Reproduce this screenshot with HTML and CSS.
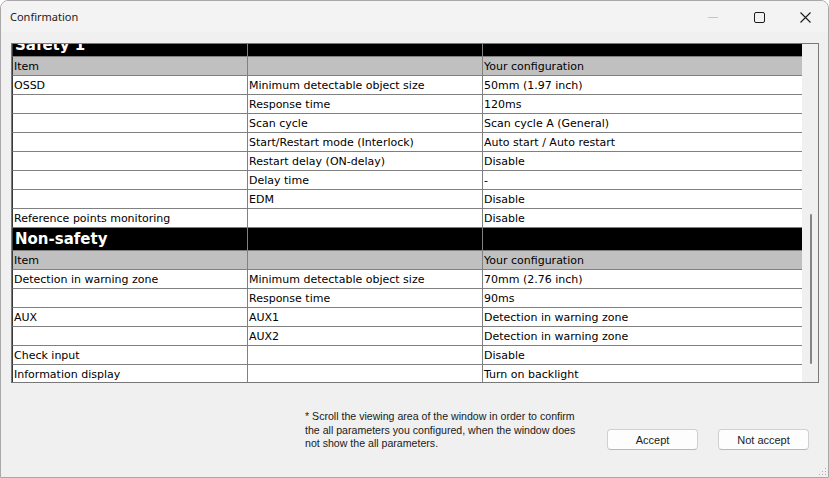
FILE: index.html
```html
<!DOCTYPE html>
<html lang="en">
<head>
<meta charset="utf-8">
<title>Confirmation</title>
<link rel="stylesheet" href="styles.css">
</head>
<body>
<div class="window">
  <div class="titlebar">
    <span class="title">Confirmation</span>
    <div class="controls">
      <span class="ctl ctl-min"><svg width="10" height="10" viewBox="0 0 10 10"><line x1="0" y1="5.5" x2="10" y2="5.5" stroke="#c6c6c6" stroke-width="1"/></svg></span>
      <span class="ctl"><svg width="11" height="11" viewBox="0 0 11 11"><rect x="0.5" y="0.5" width="10" height="10" rx="1.5" fill="none" stroke="#1b1b1b" stroke-width="1"/></svg></span>
      <span class="ctl"><svg width="11" height="11" viewBox="0 0 11 11"><path d="M0.5 0.5 L10.5 10.5 M10.5 0.5 L0.5 10.5" stroke="#1b1b1b" stroke-width="1.1" fill="none"/></svg></span>
    </div>
  </div>
  <div class="content">
    <div class="panel">
      <div class="viewport">
        <table class="grid">
          <colgroup><col class="c1"><col class="c2"><col class="c3"></colgroup>
          <tr class="section"><td>Safety 1</td><td></td><td></td></tr>
          <tr class="head"><td>Item</td><td></td><td>Your configuration</td></tr>
          <tr><td>OSSD</td><td>Minimum detectable object size</td><td>50mm (1.97 inch)</td></tr>
          <tr><td></td><td>Response time</td><td>120ms</td></tr>
          <tr><td></td><td>Scan cycle</td><td>Scan cycle A (General)</td></tr>
          <tr><td></td><td>Start/Restart mode (Interlock)</td><td>Auto start / Auto restart</td></tr>
          <tr><td></td><td>Restart delay (ON-delay)</td><td>Disable</td></tr>
          <tr><td></td><td>Delay time</td><td>-</td></tr>
          <tr><td></td><td>EDM</td><td>Disable</td></tr>
          <tr><td>Reference points monitoring</td><td></td><td>Disable</td></tr>
          <tr class="section"><td>Non-safety</td><td></td><td></td></tr>
          <tr class="head"><td>Item</td><td></td><td>Your configuration</td></tr>
          <tr><td>Detection in warning zone</td><td>Minimum detectable object size</td><td>70mm (2.76 inch)</td></tr>
          <tr><td></td><td>Response time</td><td>90ms</td></tr>
          <tr><td>AUX</td><td>AUX1</td><td>Detection in warning zone</td></tr>
          <tr><td></td><td>AUX2</td><td>Detection in warning zone</td></tr>
          <tr><td>Check input</td><td></td><td>Disable</td></tr>
          <tr><td>Information display</td><td></td><td>Turn on backlight</td></tr>
        </table>
      </div>
      <div class="scrollbar"><div class="thumb"></div></div>
    </div>
    <div class="footer">
      <p class="note">* Scroll the viewing area of the window in order to confirm<br>the all parameters you configured, when the window does<br>not show the all parameters.</p>
      <div class="buttons">
        <button class="btn">Accept</button>
        <button class="btn">Not accept</button>
      </div>
    </div>
    <svg class="grip" width="10" height="10" viewBox="0 0 10 10">
      <rect x="8" y="2" width="1" height="1" fill="#b0b0b0"/>
      <rect x="5" y="5" width="1" height="1" fill="#b0b0b0"/>
      <rect x="8" y="5" width="1" height="1" fill="#b0b0b0"/>
      <rect x="2" y="8" width="1" height="1" fill="#b0b0b0"/>
      <rect x="5" y="8" width="1" height="1" fill="#b0b0b0"/>
      <rect x="8" y="8" width="1" height="1" fill="#b0b0b0"/>
    </svg>
  </div>
</div>
</body>
</html>
```
FILE: styles.css
```css
html, body {
  margin: 0;
  padding: 0;
  background: #ffffff;
}

.window {
  width: 829px;
  height: 478px;
  box-sizing: border-box;
  border: 1px solid #a8a8a8;
  border-radius: 8px 8px 0 0;
  overflow: hidden;
  display: flex;
  flex-direction: column;
  background: #f0f0f0;
}

.titlebar {
  height: 31px;
  flex: none;
  display: flex;
  align-items: center;
  background: #f3f3f3;
  padding-left: 9px;
}

.title {
  font-family: "Noto Sans", sans-serif;
  font-size: 11px;
  line-height: 31px;
  color: #1b1b1b;
  flex: 1;
}

.controls {
  display: flex;
  height: 31px;
}

.ctl {
  width: 46px;
  height: 31px;
  display: flex;
  align-items: center;
  justify-content: center;
}

.ctl svg {
  display: block;
  margin-top: 1px;
}

.content {
  flex: 1;
  position: relative;
  display: flex;
  flex-direction: column;
  padding: 11px 0 0 10px;
  background: #f0f0f0;
}

.panel {
  width: 806px;
  height: 338px;
  border: 1px solid #787878;
  display: flex;
  overflow: hidden;
  flex: none;
}

.viewport {
  width: 790px;
  overflow: hidden;
  background: #ffffff;
}

.grid {
  margin-top: -10px;
  width: 790px;
  table-layout: fixed;
  border-collapse: separate;
  border-spacing: 0;
  font-family: "DejaVu Sans", sans-serif;
  font-size: 11px;
  color: #000000;
}

.c1, .c2 { width: 235px; }
.c3 { width: 320px; }

.grid td {
  border-left: 1px solid #808080;
  border-bottom: 1px solid #808080;
  height: 16px;
  padding: 2px 0 0 1px;
  line-height: 16px;
  white-space: nowrap;
  overflow: hidden;
  background: #ffffff;
}

.grid td:first-child {
  border-left-color: #3a3a3a;
}

.grid .head td {
  background: #c0c0c0;
}

.grid .section td {
  background: #000000;
  color: #ffffff;
  font-weight: bold;
  font-size: 15px;
  height: 22px;
  line-height: 22px;
  padding: 0 0 0 2px;
}

.scrollbar {
  width: 16px;
  flex: none;
  background: #f0f0f0;
  display: flex;
  justify-content: center;
  padding-left: 1px;
  box-sizing: border-box;
}

.thumb {
  width: 2px;
  height: 150px;
  margin-top: 170px;
  background: #858585;
  border-radius: 1px;
}

.footer {
  display: flex;
  align-items: flex-start;
  padding: 27px 19px 0 294px;
}

.note {
  margin: 0;
  font-family: "Liberation Sans", sans-serif;
  font-size: 10.6px;
  line-height: 13.7px;
  color: #1a1a1a;
}

.buttons {
  margin-left: auto;
  margin-top: 19px;
  display: flex;
  gap: 20px;
}

.btn {
  height: 21px;
  width: 91px;
  padding: 0;
  box-sizing: border-box;
  background: #fdfdfd;
  border: 1px solid #d0d0d0;
  border-bottom-color: #b8b8b8;
  border-radius: 4px;
  font-family: "Liberation Sans", sans-serif;
  font-size: 11px;
  color: #1b1b1b;
}

.grip {
  position: absolute;
  right: 1px;
  bottom: 1px;
}
```
